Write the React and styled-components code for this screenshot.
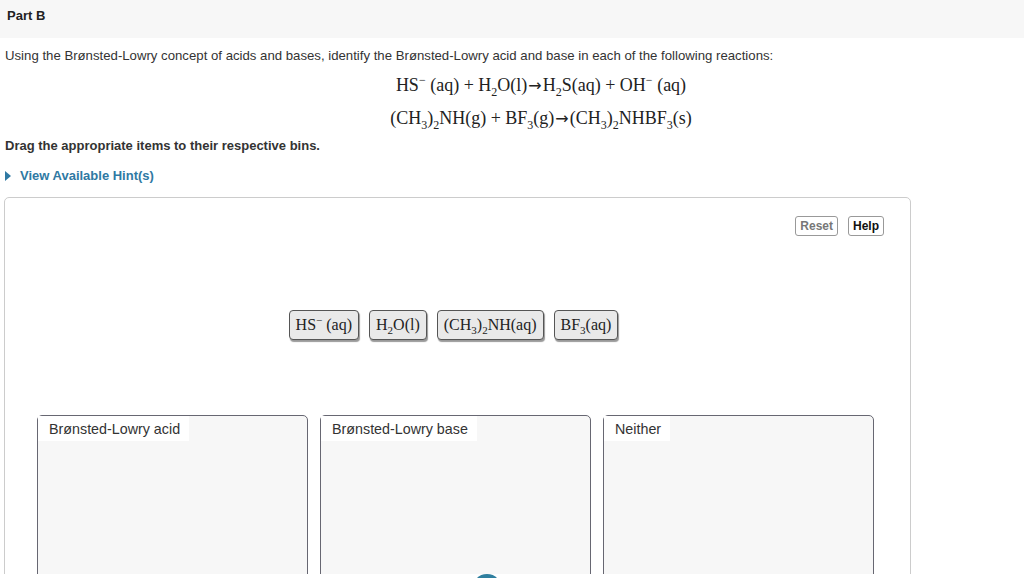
import React from "react";
import styled, { createGlobalStyle } from "styled-components";

const Global = createGlobalStyle`
  html, body {
    margin: 0;
    padding: 0;
    background: #fff;
    overflow: hidden;
  }
  body {
    font-family: "Liberation Sans", Arial, sans-serif;
    color: #333;
  }
`;

const Viewport = styled.div`
  height: 574px;
  overflow: hidden;
`;

const Header = styled.div`
  height: 38px;
  box-sizing: border-box;
  background: #f7f7f7;
  padding: 8px 7px 0;
  font-size: 13px;
  line-height: 15px;
  font-weight: bold;
  color: #222;
`;

const Intro = styled.p`
  margin: 9px 0 0 5px;
  font-size: 13.2px;
  line-height: 18px;
`;

const Equations = styled.div`
  display: flex;
  flex-direction: column;
  align-items: center;
  padding-left: 58px;
  margin-top: 9px;
  gap: 10px;
`;

const Equation = styled.div`
  font-family: "Liberation Serif", "Times New Roman", serif;
  font-size: 18px;
  line-height: 23px;
  color: #222;
  white-space: nowrap;
  sup, sub {
    font-size: 12px;
    line-height: 0;
  }
`;

const Arrow = styled.span`
  font-family: "DejaVu Sans", sans-serif;
  font-size: 16px;
  margin: 0 1px;
`;

const Instruction = styled.p`
  margin: 7px 0 0 5px;
  font-size: 13px;
  font-weight: bold;
  line-height: 18px;
`;

const HintLink = styled.div`
  display: flex;
  align-items: center;
  gap: 9px;
  margin: 12px 0 0 5px;
  font-size: 13px;
  font-weight: bold;
  color: #2f79a3;
  line-height: 18px;
`;

const Triangle = styled.span`
  width: 0;
  height: 0;
  border-top: 5px solid transparent;
  border-bottom: 5px solid transparent;
  border-left: 6px solid #2f79a3;
`;

const Board = styled.div`
  margin: 12px 0 0 4px;
  width: 907px;
  border: 1px solid #ccc;
  border-radius: 5px;
  padding: 18px 36px 0 32px;
  box-sizing: border-box;
  height: 420px;
`;

const Toolbar = styled.div`
  display: flex;
  justify-content: flex-end;
  gap: 10px;
  margin-right: -10px;
`;

const ToolButton = styled.button`
  font-family: "Liberation Sans", Arial, sans-serif;
  font-size: 12px;
  font-weight: bold;
  color: ${(p) => (p.muted ? "#777" : "#111")};
  background: #fff;
  border: 1px solid #999;
  border-radius: 3px;
  padding: 2px 4px;
  height: 20px;
  line-height: 14px;
`;

const Items = styled.div`
  display: flex;
  justify-content: center;
  gap: 10px;
  margin-top: 74px;
  padding-right: 4px;
`;

const Chip = styled.div`
  font-family: "Liberation Serif", "Times New Roman", serif;
  font-size: 16px;
  color: #222;
  background: #e9e9e9;
  border: 1px solid #555;
  border-radius: 4px;
  box-shadow: 1px 2px 1px #999;
  height: 28px;
  padding: 0 6px;
  display: flex;
  align-items: center;
  white-space: nowrap;
  sup, sub {
    font-size: 11px;
    line-height: 0;
  }
`;

const Bins = styled.div`
  display: grid;
  grid-template-columns: repeat(3, 271px);
  gap: 12px;
  margin-top: 75px;
`;

const Bin = styled.div`
  height: 200px;
  background: #f7f7f7;
  border: 1.5px solid #676772;
  border-radius: 5px;
  box-sizing: border-box;
`;

const BinLabel = styled.div`
  display: inline-block;
  background: #fff;
  font-size: 14.3px;
  color: #333;
  padding: 5px 9px 4px 11px;
  line-height: 16px;
`;

const FloatDot = styled.div`
  position: fixed;
  top: 574px;
  left: 472px;
  width: 30px;
  height: 30px;
  border-radius: 50%;
  background: #2f7f9f;
`;

const bins = ["Brønsted-Lowry acid", "Brønsted-Lowry base", "Neither"];

export default function App() {
  return (
    <>
      <Global />
      <Viewport>
        <Header>Part B</Header>
        <Intro>
          Using the Brønsted-Lowry concept of acids and bases, identify the
          Brønsted-Lowry acid and base in each of the following reactions:
        </Intro>
        <Equations>
          <Equation>
            HS<sup>−</sup> (aq) + H<sub>2</sub>O(l)<Arrow>→</Arrow>H<sub>2</sub>S(aq) + OH
            <sup>−</sup> (aq)
          </Equation>
          <Equation>
            (CH<sub>3</sub>)<sub>2</sub>NH(g) + BF<sub>3</sub>(g)<Arrow>→</Arrow>(CH
            <sub>3</sub>)<sub>2</sub>NHBF<sub>3</sub>(s)
          </Equation>
        </Equations>
        <Instruction>Drag the appropriate items to their respective bins.</Instruction>
        <HintLink>
          <Triangle />
          View Available Hint(s)
        </HintLink>
        <Board>
          <Toolbar>
            <ToolButton muted>Reset</ToolButton>
            <ToolButton>Help</ToolButton>
          </Toolbar>
          <Items>
            <Chip>
              <span>
                HS<sup>−</sup>&nbsp;(aq)
              </span>
            </Chip>
            <Chip>
              <span>
                H<sub>2</sub>O(l)
              </span>
            </Chip>
            <Chip>
              <span>
                (CH<sub>3</sub>)<sub>2</sub>NH(aq)
              </span>
            </Chip>
            <Chip>
              <span>
                BF<sub>3</sub>(aq)
              </span>
            </Chip>
          </Items>
          <Bins>
            {bins.map((b) => (
              <Bin key={b}>
                <BinLabel>{b}</BinLabel>
              </Bin>
            ))}
          </Bins>
        </Board>
      </Viewport>
      <FloatDot />
    </>
  );
}
